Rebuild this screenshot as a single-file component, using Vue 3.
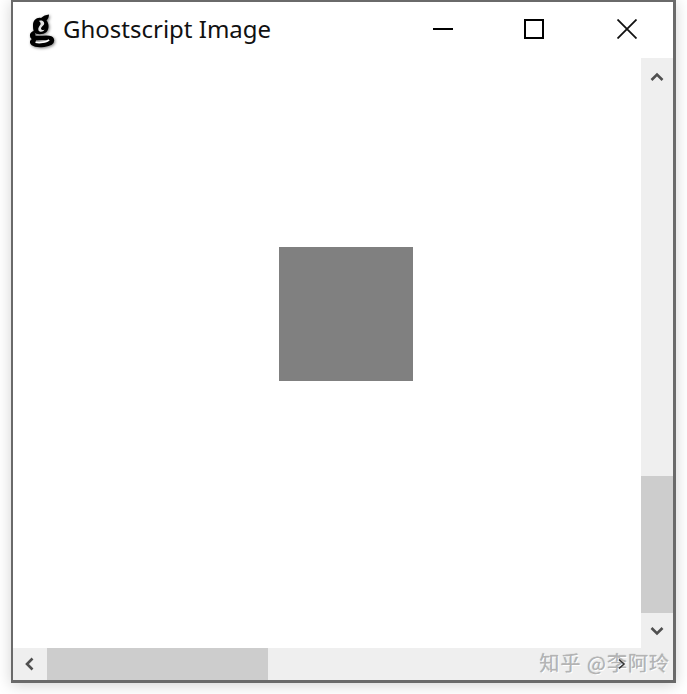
<script setup>
const title = 'Ghostscript Image'
</script>

<template>
  <div class="page">
    <div class="window">
      <header class="titlebar">
        <svg class="logo" width="28" height="32" viewBox="0 0 28 32" aria-hidden="true">
          <path d="M5 11C5 6 9 3 13 4C15 2 18 0.800 21 0.500C21 3 20 5 18.500 6.500C21 9 21.500 15 18.500 18C15 21 8 21 6 18C5 16 5 13 5 11Z" fill="#000" />
          <path d="M7 19C3 20 3 23.500 8 24C14 24.500 24 22 24 26.500C24 31 9 32.500 5 29.500C3 28 4.500 26 8 26.500" fill="none" stroke="#000" stroke-width="4.400" />
          <path d="M11 7C14 5.500 17 8 16 10.500C15 12 13 13 13 14.500C13 16 15 16.500 16.500 15.500C15.500 18 12 18.500 10.500 16.500C9.500 14 11.500 12 12.500 10.500C13 9 12 8 11 7Z" fill="#e4e4e4" />
          <path d="M7.500 28.300C12 29.300 18 28.300 21 25.800" fill="none" stroke="#fff" stroke-width="1.500" />
        </svg>
        <span class="title">{{ title }}</span>
        <div class="controls">
          <button class="ctl ctl-min" aria-label="Minimize">
            <svg width="20" height="20" viewBox="0 0 20 20"><path d="M0 10H20" stroke="#000" stroke-width="2" /></svg>
          </button>
          <button class="ctl ctl-max" aria-label="Maximize">
            <svg width="20" height="20" viewBox="0 0 20 20"><rect x="1" y="1" width="18" height="18" fill="none" stroke="#000" stroke-width="2" /></svg>
          </button>
          <button class="ctl ctl-close" aria-label="Close">
            <svg width="20" height="20" viewBox="0 0 20 20"><path d="M0.500 0.500L19.500 19.500M19.500 0.500L0.500 19.500" stroke="#111" stroke-width="1.800" /></svg>
          </button>
        </div>
      </header>

      <div class="body">
        <main class="viewport">
          <div class="square"></div>
        </main>
        <aside class="vbar">
          <div class="arrow-v arrow-up">
            <svg width="14" height="10" viewBox="0 0 14 10"><path d="M1.500 8L7 2.500L12.500 8" fill="none" stroke="#505050" stroke-width="2.600" /></svg>
          </div>
          <div class="vspace"></div>
          <div class="vthumb"></div>
          <div class="arrow-v arrow-down">
            <svg width="14" height="10" viewBox="0 0 14 10"><path d="M1.500 2L7 7.500L12.500 2" fill="none" stroke="#505050" stroke-width="2.600" /></svg>
          </div>
        </aside>
      </div>

      <footer class="hbar">
        <div class="arrow-h arrow-left">
          <svg width="10" height="14" viewBox="0 0 10 14"><path d="M8.500 1.500L3 7L8.500 12.500" fill="none" stroke="#505050" stroke-width="2.600" /></svg>
        </div>
        <div class="hthumb"></div>
        <div class="hspace"></div>
        <div class="arrow-h arrow-right">
          <svg width="10" height="12" viewBox="0 0 10 12"><path d="M2 1.500L7 6L2 10.500" fill="none" stroke="#333" stroke-width="1.600" /></svg>
        </div>
      </footer>

      <div class="watermark">知乎 @李阿玲</div>
    </div>
  </div>
</template>

<style>
html, body { margin: 0; background: #fff; }
</style>

<style scoped>
.page {
  width: 687px;
  height: 694px;
  padding-left: 11px;
  box-sizing: border-box;
  overflow: hidden;
  background: #fff;
}
.window {
  position: relative;
  width: 665px;
  height: 683px;
  box-sizing: border-box;
  border: 2px solid #6a6a6a;
  border-right-width: 3px;
  border-bottom-width: 3px;
  background: #fff;
  display: flex;
  flex-direction: column;
  box-shadow: 0 2px 14px rgba(0, 0, 0, 0.18);
}
.titlebar {
  height: 56px;
  flex: none;
  display: flex;
  align-items: center;
  padding-left: 15px;
  background: #fff;
}
.logo {
  flex: none;
  margin-top: -1px;
  overflow: visible;
  filter: drop-shadow(1px 1px 1.500px rgba(0, 0, 0, 0.5));
}
.title {
  margin-left: 7px;
  font-family: "Noto Sans", "Open Sans", sans-serif;
  font-size: 24px;
  line-height: 30px;
  color: #111;
  margin-top: -2px;
}
.controls {
  margin-left: auto;
  display: flex;
  align-items: center;
  margin-top: -2px;
  padding-right: 36px;
}
.ctl {
  width: 20px;
  height: 20px;
  padding: 0;
  border: 0;
  background: transparent;
  display: block;
}
.ctl-max { margin-left: 71px; }
.ctl-close { margin-left: 73px; }
.ctl svg { display: block; }
.body {
  flex: 1;
  display: flex;
  min-height: 0;
}
.viewport {
  flex: 1;
  background: #fff;
  padding: 189px 0 0 266px;
  box-sizing: border-box;
}
.square {
  width: 134px;
  height: 134px;
  background: #808080;
}
.vbar {
  width: 32px;
  flex: none;
  display: flex;
  flex-direction: column;
  background: #efefef;
}
.arrow-v {
  height: 36px;
  flex: none;
  box-sizing: border-box;
  display: flex;
  align-items: center;
  justify-content: center;
}
.arrow-up { padding-top: 2px; }
.arrow-down { height: 35px; }
.vspace { height: 382px; flex: none; }
.vthumb { flex: 1; background: #cdcdcd; }
.hbar {
  height: 32px;
  flex: none;
  display: flex;
  background: #efefef;
}
.arrow-h {
  flex: none;
  box-sizing: border-box;
  display: flex;
  align-items: center;
  justify-content: center;
}
.arrow-left { width: 34px; padding-right: 2px; }
.hthumb { width: 221px; flex: none; background: #cdcdcd; }
.hspace { flex: 1; }
.arrow-right {
  position: relative;
  z-index: 1;
  width: 32px;
  margin-right: 35px;
}
.watermark {
  position: absolute;
  right: 3px;
  bottom: 0;
  height: 34px;
  line-height: 34px;
  font-family: "Noto Sans CJK SC", sans-serif;
  font-size: 20px;
  letter-spacing: 1px;
  color: #b4b4b4;
  text-shadow: 1px 1px 0 #fff, 0 0 1px #999;
  white-space: nowrap;
}
</style>
